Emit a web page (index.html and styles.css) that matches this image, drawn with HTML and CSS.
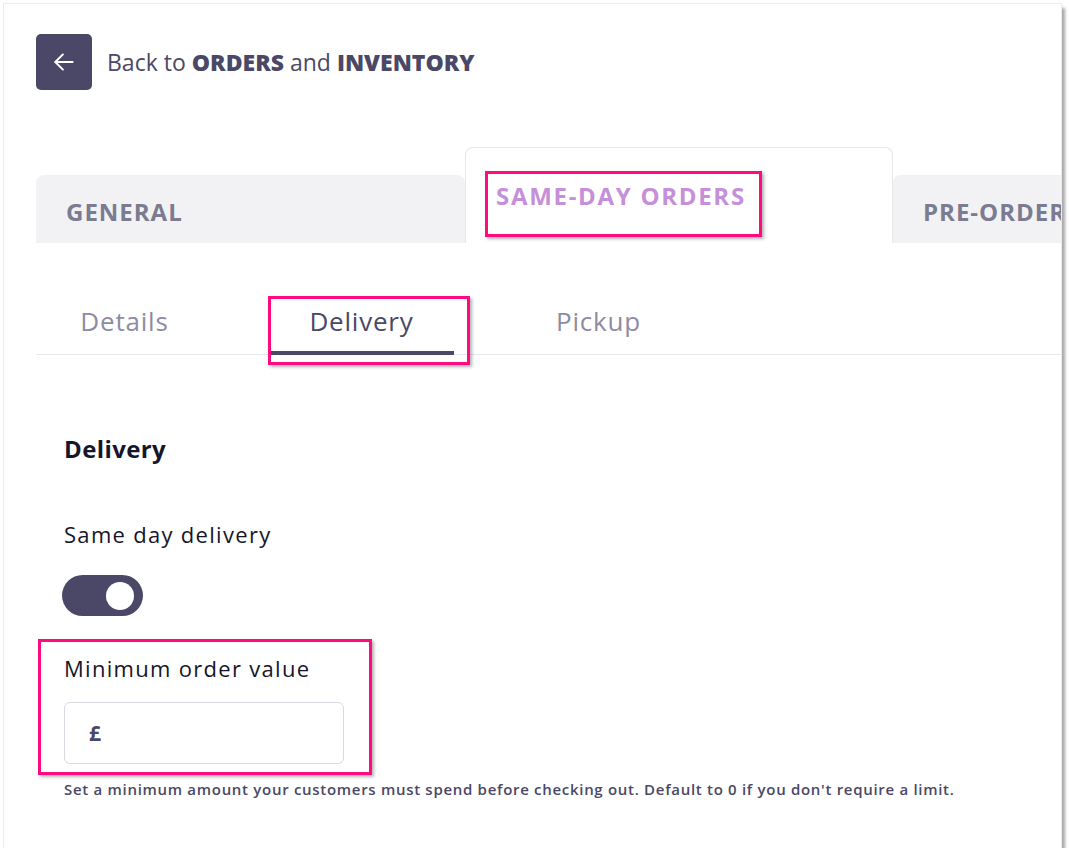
FILE: index.html
```html
<!DOCTYPE html>
<html lang="en">

<head>
    <meta charset="UTF-8">
    <meta name="viewport" content="width=device-width, initial-scale=1.0">
    <title>Same-day orders - Delivery</title>
    <link rel="stylesheet" href="styles.css">
</head>

<body>
    <div class="frame">
        <!-- back link -->
        <a class="back" href="#">
            <span class="back-btn">
                <svg width="26" height="26" viewBox="0 0 24 24" fill="none" stroke="#fff" stroke-width="1.8" stroke-linecap="round" stroke-linejoin="round">
                    <path d="M20 12H4"></path>
                    <path d="M11 5l-7 7 7 7"></path>
                </svg>
            </span>
            <span class="back-text">Back to <b>ORDERS</b> and <b>INVENTORY</b></span>
        </a>

        <!-- main tabs -->
        <div class="tabs">
            <div class="tab">GENERAL</div>
            <div class="tab active">
                <span class="tab-label">SAME-DAY ORDERS</span>
                <span class="mark mark-tab"></span>
            </div>
            <div class="tab">PRE-ORDERS</div>
        </div>

        <!-- sub tabs -->
        <div class="subtabs">
            <div class="subtab">Details</div>
            <div class="subtab current">Delivery</div>
            <div class="subtab">Pickup</div>
            <span class="mark mark-subtab"></span>
        </div>

        <!-- delivery settings -->
        <div class="panel">
            <h2>Delivery</h2>
            <div class="label">Same day delivery</div>
            <div class="toggle"><span class="knob"></span></div>

            <div class="field">
                <div class="label">Minimum order value</div>
                <div class="input">£</div>
                <span class="mark mark-field"></span>
            </div>
            <p class="hint">Set a minimum amount your customers must spend before checking out. Default to 0 if you don't require a limit.</p>
        </div>
    </div>
</body>

</html>
```

FILE: styles.css
```css
body {
    margin: 0;
    background: #fff;
    font-family: "Open Sans", "Liberation Sans", sans-serif;
    color: #16162a;
}

.frame {
    margin: 4px 0 0 4px;
    width: 1057px;
    height: 844px;
    box-sizing: border-box;
    padding: 30px 0 0 32px;
    background: #fff;
    overflow: hidden;
    box-shadow: 0 0 0 1px #ececec, 4px 4px 3px rgba(0, 0, 0, 0.35);
}

.back {
    display: flex;
    align-items: center;
    gap: 15px;
    text-decoration: none;
    color: #4a4866;
}

.back-btn {
    width: 56px;
    height: 56px;
    border-radius: 5px;
    background: #4a4866;
    display: flex;
    align-items: center;
    justify-content: center;
}

.back-text {
    font-size: 23px;
    margin-top: -1px;
}

.back-text b {
    font-weight: 800;
}

/* main tabs */
.tabs {
    margin-top: 57px;
    display: flex;
    align-items: flex-end;
    width: 1400px;
}

.tab {
    width: 429px;
    height: 68px;
    box-sizing: border-box;
    padding: 20px 0 0 30px;
    background: #f2f2f4;
    border-radius: 8px 8px 0 0;
    font-size: 24px;
    font-weight: 700;
    color: #7b7b91;
    letter-spacing: 1px;
}

.tab.active {
    position: relative;
    width: 428px;
    height: 96px;
    background: #fff;
    border: 1px solid #e6e6eb;
    border-bottom: none;
    padding: 31px 0 0 30px;
    color: #c68fda;
    letter-spacing: 1.7px;
}

.mark {
    position: absolute;
    border: 3px solid #ff0a80;
    box-shadow: 2px 2px 3px rgba(0, 0, 0, 0.3);
}

.mark-tab {
    left: 19px;
    top: 23px;
    width: 277px;
    height: 66px;
    box-sizing: border-box;
}

/* sub tabs */
.subtabs {
    position: relative;
    display: flex;
    gap: 52px;
    border-bottom: 1px solid #e8e8ec;
}

.subtab {
    width: 185px;
    box-sizing: border-box;
    margin-bottom: -1px;
    padding: 61px 0 13px;
    border-bottom: 4px solid transparent;
    text-align: center;
    font-size: 26px;
    line-height: 34px;
    font-weight: 500;
    letter-spacing: 0.8px;
    color: #8d8ca3;
}

.subtab:first-child {
    margin-left: -4px;
}

.subtab.current {
    color: #4a4866;
    border-bottom-color: #4a4866;
}

.mark-subtab {
    left: 232px;
    top: 53px;
    width: 202px;
    height: 69px;
    box-sizing: border-box;
}

/* panel */
.panel {
    padding: 78px 0 0 28px;
}

.panel h2 {
    margin: 0;
    font-size: 24px;
    font-weight: 700;
    line-height: 32px;
    letter-spacing: 0.4px;
}

.label {
    font-size: 22px;
    line-height: 30px;
    letter-spacing: 1.3px;
}

.panel h2 + .label {
    margin-top: 54px;
}

.toggle {
    margin: 26px 0 0 -2px;
    width: 81px;
    height: 41px;
    border-radius: 21px;
    background: #4a4866;
    display: flex;
    align-items: center;
    justify-content: flex-end;
    padding-right: 9px;
    box-sizing: border-box;
}

.knob {
    width: 28px;
    height: 28px;
    border-radius: 50%;
    background: #fff;
}

.field {
    position: relative;
    margin-top: 37px;
}

.input {
    margin-top: 19px;
    width: 280px;
    height: 62px;
    box-sizing: border-box;
    border: 1px solid #d9d9e1;
    border-radius: 6px;
    padding: 0 0 0 24px;
    display: flex;
    align-items: center;
    font-size: 21px;
    font-weight: 700;
    color: #4a4866;
}

.mark-field {
    left: -26px;
    top: -14px;
    width: 334px;
    height: 136px;
    box-sizing: border-box;
}

.hint {
    margin: 15px 0 0;
    font-size: 15px;
    font-weight: 600;
    letter-spacing: 0.7px;
    color: #4a4866;
}
```
